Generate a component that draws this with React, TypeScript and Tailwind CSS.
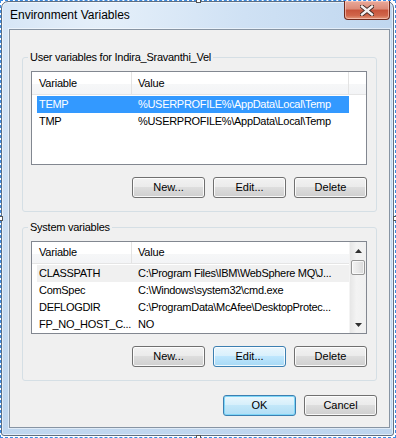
import React from "react";

type BtnKind = "normal" | "hover" | "default";

function Btn({ label, kind = "normal" }: { label: string; kind?: BtnKind }) {
  const base =
    "w-[73px] h-[21px] rounded-[3px] border flex items-center justify-center text-[11px] leading-[13px] text-black";
  const styles: Record<BtnKind, string> = {
    normal:
      "border-[#707070] shadow-[inset_0_0_0_1px_rgba(255,255,255,0.85)] bg-[linear-gradient(to_bottom,#f2f2f2_0%,#ebebeb_46%,#dddddd_50%,#cfcfcf_100%)]",
    hover:
      "border-[#3c7fb1] shadow-[inset_0_0_0_1px_rgba(255,255,255,0.8)] bg-[linear-gradient(to_bottom,#eaf6fd_0%,#d9f0fc_46%,#bee6fd_50%,#a7d9f5_100%)]",
    default:
      "border-[#3c7fb1] shadow-[inset_0_0_0_1px_#7fd6f7] bg-[linear-gradient(to_bottom,#eaf7fd_0%,#d6effb_46%,#c2e7f9_50%,#b1def5_100%)]",
  };
  return <div className={`${base} ${styles[kind]}`}>{label}</div>;
}

function GroupBox({ title, children }: { title: string; children: React.ReactNode }) {
  return (
    <div className="relative border border-[#d5dfe5] rounded-[3px] pt-[13px] pl-[8px] pr-[9px] pb-[13px]">
      <div className="absolute left-[5px] top-[-8px] px-[2px] bg-[#f0f0f0] text-[11px] leading-[14px] tracking-[-0.25px] text-black whitespace-nowrap">
        {title}
      </div>
      {children}
    </div>
  );
}

function Header({ withStub }: { withStub: boolean }) {
  return (
    <div className="flex h-[23px] border-b border-[#e5e5e5] bg-[linear-gradient(to_bottom,#ffffff_0%,#ffffff_55%,#f6f7f8_56%,#f3f4f6_100%)] text-[11px] leading-[13px] tracking-[-0.2px] text-black">
      <div className="w-[100px] border-r border-[#e3e3e3] pl-[7px] flex items-center">Variable</div>
      <div
        className={
          withStub
            ? "w-[217px] border-r border-[#e3e3e3] pl-[6px] flex items-center"
            : "flex-1 pl-[6px] flex items-center"
        }
      >
        Value
      </div>
      {withStub && <div className="flex-1" />}
    </div>
  );
}

type Row = { name: string; value: string; sel?: "focus" | "inactive" };

function Rows({ rows }: { rows: Row[] }) {
  return (
    <div className="pt-[1px] flex flex-col">
      {rows.map((r) => (
        <div
          key={r.name}
          className={
            "ml-[5px] w-[312px] h-[17px] flex items-center text-[11px] leading-[13px] tracking-[-0.3px] whitespace-nowrap overflow-hidden " +
            (r.sel === "focus"
              ? "bg-[#3399ff] text-white"
              : r.sel === "inactive"
              ? "bg-[#f0f0f0] text-black"
              : "text-black")
          }
        >
          <div className="w-[95px] shrink-0 pl-[2px] whitespace-nowrap">{r.name}</div>
          <div className="pl-[6px] whitespace-nowrap">{r.value}</div>
        </div>
      ))}
    </div>
  );
}

function Arrow({ up }: { up: boolean }) {
  return (
    <svg width="7" height="4" viewBox="0 0 7 4">
      {up ? <path d="M0 4 L3.5 0 L7 4 Z" fill="#303030" /> : <path d="M0 0 L3.5 4 L7 0 Z" fill="#303030" />}
    </svg>
  );
}

function ScrollBar() {
  return (
    <div className="w-[17px] flex flex-col bg-[linear-gradient(to_right,#e6e6e6_0%,#f3f3f3_40%,#f0f0f0_100%)] border-l border-[#f4f4f4]">
      <div className="h-[17px] flex items-center justify-center">
        <Arrow up />
      </div>
      <div className="mt-[1px] ml-[1px] w-[14px] h-[15px] rounded-[2px] border border-[#979797] bg-[linear-gradient(to_right,#f3f3f3_0%,#e8e8e8_50%,#d8d8d8_100%)] shadow-[inset_0_0_0_1px_rgba(255,255,255,0.7)]" />
      <div className="flex-1" />
      <div className="h-[17px] flex items-center justify-center">
        <Arrow up={false} />
      </div>
    </div>
  );
}

export default function App() {
  const userRows: Row[] = [
    { name: "TEMP", value: "%USERPROFILE%\\AppData\\Local\\Temp", sel: "focus" },
    { name: "TMP", value: "%USERPROFILE%\\AppData\\Local\\Temp" },
  ];
  const sysRows: Row[] = [
    { name: "CLASSPATH", value: "C:\\Program Files\\IBM\\WebSphere MQ\\J...", sel: "inactive" },
    { name: "ComSpec", value: "C:\\Windows\\system32\\cmd.exe" },
    { name: "DEFLOGDIR", value: "C:\\ProgramData\\McAfee\\DesktopProtec..." },
    { name: "FP_NO_HOST_C...", value: "NO" },
  ];

  return (
    <div className="relative w-[396px] h-[438px] bg-white overflow-hidden font-['Liberation_Sans',Arial,sans-serif]">
      {/* window */}
      <div className="ml-[1px] mt-[1px] w-[393px] h-[435px] rounded-t-[7px] rounded-b-[3px] border border-[#5d6e82] pl-[7px] pr-[3px] pb-[7px] flex flex-col bg-[radial-gradient(ellipse_at_25%_0%,#e6f0fa_0%,#cfe1f4_35%,#c0d7ef_70%,#bdd5ee_100%)] shadow-[inset_0_0_0_1px_rgba(255,255,255,0.55)]">
        {/* title bar */}
        <div className="h-[27px] flex justify-between items-start">
          <div className="pl-[1px] pt-[6px] text-[12px] leading-[15px] text-black whitespace-nowrap">
            Environment Variables
          </div>
          <div className="-mt-[1px] w-[46px] h-[19px] rounded-b-[4px] border border-[#6f2a1c] border-t-0 flex items-center justify-center bg-[linear-gradient(to_bottom,#e9a99a_0%,#dc8a77_45%,#c7533a_50%,#d0654a_80%,#e39a7c_100%)] shadow-[inset_0_0_0_1px_rgba(255,210,200,0.6)]">
            <svg width="14" height="11" viewBox="0 0 14 11">
              <path d="M2 1.5 L12 9.5 M12 1.5 L2 9.5" stroke="#3c2520" strokeWidth="4.2" strokeLinecap="square" />
              <path d="M2 1.5 L12 9.5 M12 1.5 L2 9.5" stroke="#f4f0f0" strokeWidth="2.4" strokeLinecap="square" />
            </svg>
          </div>
        </div>

        {/* client area */}
        <div className="h-[399px] bg-[#f0f0f0] border border-[#8794a3] shadow-[0_0_0_1px_rgba(255,255,255,0.5)] flex flex-col px-[12px] pt-[27px] pb-[10px]">
          <GroupBox title="User variables for Indira_Sravanthi_Vel">
            <div className="w-[336px] h-[94px] border border-[#828790] bg-white flex flex-col overflow-hidden">
              <Header withStub />
              <Rows rows={userRows} />
            </div>
            <div className="mt-[12px] flex justify-end gap-[8px]">
              <Btn label="New..." />
              <Btn label="Edit..." />
              <Btn label="Delete" />
            </div>
          </GroupBox>

          <div className="mt-[15px]">
            <GroupBox title="System variables">
              <div className="w-[336px] h-[93px] border border-[#828790] bg-white flex overflow-hidden">
                <div className="w-[317px] flex flex-col">
                  <Header withStub={false} />
                  <Rows rows={sysRows} />
                </div>
                <ScrollBar />
              </div>
              <div className="mt-[12px] flex justify-end gap-[8px]">
                <Btn label="New..." />
                <Btn label="Edit..." kind="hover" />
                <Btn label="Delete" />
              </div>
            </GroupBox>
          </div>

          <div className="mt-[14px] flex justify-end gap-[8px]">
            <Btn label="OK" kind="default" />
            <Btn label="Cancel" />
          </div>
        </div>
      </div>

      {/* screenshot selection overlay */}
      <div className="absolute inset-0 border border-dashed border-[#3a8be4] pointer-events-none" />
      <div className="absolute left-[196px] top-[-2px] w-[5px] h-[5px] bg-white border border-[#555]" />
      <div className="absolute left-[196px] bottom-[-2px] w-[5px] h-[5px] bg-white border border-[#555]" />
      <div className="absolute left-[-2px] top-[216px] w-[5px] h-[5px] bg-white border border-[#555]" />
      <div className="absolute right-[-2px] top-[216px] w-[5px] h-[5px] bg-white border border-[#555]" />
    </div>
  );
}
